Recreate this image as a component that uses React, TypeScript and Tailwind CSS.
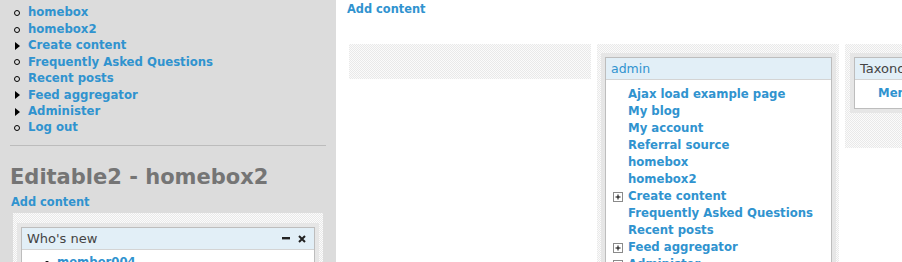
import React from 'react';

const hatch =
  'bg-[image:repeating-conic-gradient(#e9e9e9_0_25%,#fbfbfb_0_50%)] bg-[length:2px_2px]';

const sideMenu: { label: string; kind: 'leaf' | 'closed' }[] = [
  { label: 'homebox', kind: 'leaf' },
  { label: 'homebox2', kind: 'leaf' },
  { label: 'Create content', kind: 'closed' },
  { label: 'Frequently Asked Questions', kind: 'leaf' },
  { label: 'Recent posts', kind: 'leaf' },
  { label: 'Feed aggregator', kind: 'closed' },
  { label: 'Administer', kind: 'closed' },
  { label: 'Log out', kind: 'leaf' },
];

const adminMenu: { label: string; icon?: 'plus' | 'minus' }[] = [
  { label: 'Ajax load example page' },
  { label: 'My blog' },
  { label: 'My account' },
  { label: 'Referral source' },
  { label: 'homebox' },
  { label: 'homebox2' },
  { label: 'Create content', icon: 'plus' },
  { label: 'Frequently Asked Questions' },
  { label: 'Recent posts' },
  { label: 'Feed aggregator', icon: 'plus' },
  { label: 'Administer', icon: 'minus' },
  { label: 'Log out' },
];

function Marker({ kind }: { kind: 'leaf' | 'closed' }) {
  if (kind === 'closed') {
    return (
      <svg width="5" height="8" viewBox="0 0 5 8" className="ml-[15px]">
        <path d="M0 0 L5 4 L0 8 Z" fill="#000" />
      </svg>
    );
  }
  return <span className="ml-[14px] block h-[6px] w-[6px] rounded-full border border-black" />;
}

function BoxIcon({ type }: { type: 'plus' | 'minus' }) {
  return (
    <svg width="10" height="10" viewBox="0 0 10 10" className="absolute left-[-15px] top-[4px]">
      <rect x="0.5" y="0.5" width="9" height="9" fill="#fff" stroke="#8a8a8a" />
      <path d="M2.5 5 H7.5" stroke="#000" />
      {type === 'plus' && <path d="M5 2.5 V7.5" stroke="#000" />}
    </svg>
  );
}

function Panel({
  title,
  titleClass,
  tools,
  children,
}: {
  title: string;
  titleClass: string;
  tools?: boolean;
  children: React.ReactNode;
}) {
  return (
    <div className="border-4 border-[#e6e6e6]">
      <div className="border border-[#bdbdbd] bg-white">
        <div className="flex h-[22px] items-center justify-between border-b border-[#d4d4d4] bg-[#e2eff7] pl-[5px] pr-[8px]">
          <span className={titleClass}>{title}</span>
          {tools && (
            <span className="flex items-center gap-[8px]">
              <svg width="8" height="3" viewBox="0 0 8 3">
                <rect width="8" height="2.4" fill="#222" />
              </svg>
              <svg width="8" height="8" viewBox="0 0 8 8">
                <path d="M1 1 L7 7 M7 1 L1 7" stroke="#222" strokeWidth="2" />
              </svg>
            </span>
          )}
        </div>
        {children}
      </div>
    </div>
  );
}

export default function App() {
  const link = 'font-bold text-[#3093cf] text-[11.7px]';
  const addLink = 'font-bold text-[#3093cf] text-[11.4px]';
  return (
    <div className="flex h-[262px] w-[902px] overflow-hidden bg-white font-['DejaVu_Sans',sans-serif]">
      <aside className="w-[336px] shrink-0 bg-[#dcdcdc]">
        <ul className="pt-[5px]">
          {sideMenu.map((m) => (
            <li key={m.label} className="flex h-[16.43px] items-center">
              <span className="flex w-[28px] items-center">
                <Marker kind={m.kind} />
              </span>
              <span className={link}>{m.label}</span>
            </li>
          ))}
        </ul>
        <div className="mx-[10px] mt-[9px] border-t border-[#bcbcbc]" />
        <h2 className="ml-[10px] mt-[19px] text-[21px] font-bold leading-[25px] text-[#757575]">
          Editable2 - homebox2
        </h2>
        <div className={`ml-[11px] mt-[4px] leading-[16px] ${addLink}`}>Add content</div>
        <div className={`mx-[13px] mt-[3px] px-[4px] pt-[10px] ${hatch}`}>
          <Panel title="Who's new" titleClass="text-[13px] text-[#444]" tools>
            <ul className="pl-[23px] pt-[4px]">
              <li className="flex h-[17px] items-center">
                <span className="mr-[8px] block h-[4px] w-[4px] rounded-full bg-black" />
                <span className={link}>member004</span>
              </li>
            </ul>
          </Panel>
        </div>
      </aside>

      <main className="flex-1">
        <div className={`ml-[11px] pt-[1px] leading-[16px] ${addLink}`}>Add content</div>
        <div className="ml-[13px] mt-[27px] flex items-start gap-[6px]">
          <div className={`h-[35px] w-[242px] shrink-0 ${hatch}`} />
          <div className={`w-[242px] shrink-0 pl-[4px] pr-[3px] pt-[9px] ${hatch}`}>
            <Panel title="admin" titleClass="text-[12.5px] text-[#3093cf] pt-[1px]">
              <ul className="pl-[22px] pt-[6px]">
                {adminMenu.map((m) => (
                  <li key={m.label} className="relative flex h-[17px] items-center">
                    {m.icon && <BoxIcon type={m.icon} />}
                    <span className={link}>{m.label}</span>
                  </li>
                ))}
              </ul>
            </Panel>
          </div>
          <div className={`w-[242px] shrink-0 pb-[35px] pl-[5px] pr-[4px] pt-[9px] ${hatch}`}>
            <Panel title="Taxonomy menu" titleClass="text-[13px] text-[#444]">
              <div className="flex h-[28px] items-center pl-[23px]">
                <span className={link}>Menu</span>
              </div>
            </Panel>
          </div>
        </div>
      </main>
    </div>
  );
}
